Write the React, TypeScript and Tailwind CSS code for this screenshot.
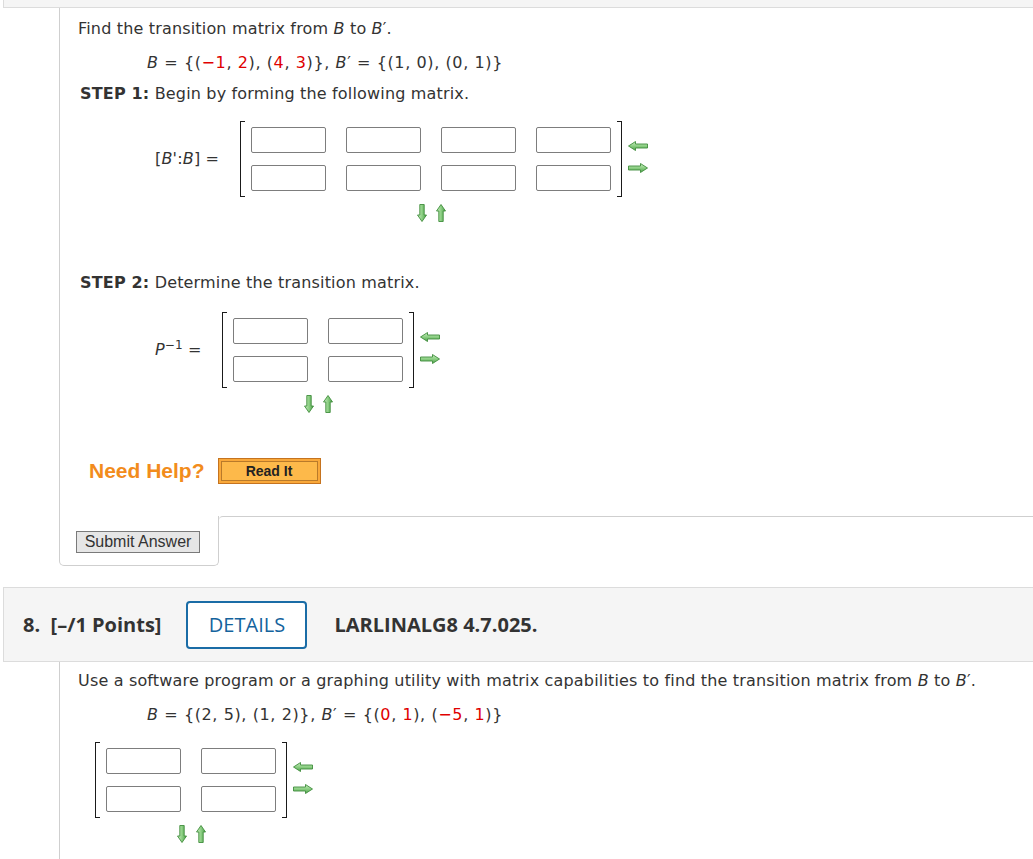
import React from "react";

const FONT = { fontFamily: '"DejaVu Sans", Verdana, sans-serif' };

function HArrow({ dir }: { dir: "left" | "right" }) {
  const pts =
    dir === "left"
      ? "0.5,5 7.5,0.5 7.5,3 19.5,3 19.5,7 7.5,7 7.5,9.5"
      : "19.5,5 12.5,0.5 12.5,3 0.5,3 0.5,7 12.5,7 12.5,9.5";
  return (
    <svg width="20" height="10" viewBox="0 0 20 10">
      <defs>
        <linearGradient id="hg" x1="0" y1="0" x2="0" y2="1">
          <stop offset="0" stopColor="#c9ecc0" />
          <stop offset="0.5" stopColor="#8ccf83" />
          <stop offset="1" stopColor="#4d9f4a" />
        </linearGradient>
      </defs>
      <polygon points={pts} fill="url(#hg)" stroke="#3f8d3c" strokeWidth="0.9" strokeLinejoin="round" />
    </svg>
  );
}

function VArrow({ dir }: { dir: "up" | "down" }) {
  const pts =
    dir === "down"
      ? "2.8,0.5 7.2,0.5 7.2,11 9.5,11 5,17.5 0.5,11 2.8,11"
      : "2.8,17.5 7.2,17.5 7.2,7 9.5,7 5,0.5 0.5,7 2.8,7";
  return (
    <svg width="10" height="18" viewBox="0 0 10 18">
      <defs>
        <linearGradient id="vg" x1="0" y1="0" x2="1" y2="0">
          <stop offset="0" stopColor="#c9ecc0" />
          <stop offset="0.5" stopColor="#8ccf83" />
          <stop offset="1" stopColor="#4d9f4a" />
        </linearGradient>
      </defs>
      <polygon points={pts} fill="url(#vg)" stroke="#3f8d3c" strokeWidth="0.9" strokeLinejoin="round" />
    </svg>
  );
}

function Matrix({ cols }: { cols: number }) {
  const cells = Array.from({ length: cols * 2 });
  return (
    <div className="flex items-start">
      <div className="flex flex-col items-center">
        <div className="flex h-[76px]">
          <div className="w-[5px] border-y border-l border-[#1a1a1a]" />
          <div
            className={`grid gap-x-[20px] gap-y-[12px] px-[6px] py-[6px] ${cols === 4 ? "grid-cols-4" : "grid-cols-2"}`}
          >
            {cells.map((_, i) => (
              <div key={i} className="h-[26px] w-[75px] rounded-[2px] border border-[#7d7d7d] bg-white" />
            ))}
          </div>
          <div className="w-[5px] border-y border-r border-[#1a1a1a]" />
        </div>
        <div className="mt-[7px] flex gap-[9px]">
          <VArrow dir="down" />
          <VArrow dir="up" />
        </div>
      </div>
      <div className="ml-[6px] mt-[20px] flex flex-col gap-[12px]">
        <HArrow dir="left" />
        <HArrow dir="right" />
      </div>
    </div>
  );
}

const R = ({ children }: { children: React.ReactNode }) => <span className="text-[#e00000]">{children}</span>;

export default function App() {
  return (
    <div
      className="relative h-[859px] w-[1033px] overflow-hidden bg-white text-[16px] leading-[20px] tracking-[0.17px] text-[#333]"
      style={FONT}
    >
      {/* top strip */}
      <div className="ml-[3px] h-[8px] border-b border-l border-[#dcdcdc] bg-[#f5f5f5]" />

      {/* question 7 body */}
      <div className="ml-[59px]">
        <div className="flex flex-col border-l border-[#cfcfcf] pb-[32px] pl-[18px] pt-[11px]">
          <div>
            Find the transition matrix from <i>B</i> to <i>B</i>′.
          </div>
          <div className="ml-[69px] mt-[14px] tracking-[0.6px]">
            <i>B</i> = {"{("}
            <R>−1</R>, <R>2</R>), (<R>4</R>, <R>3</R>){"}"}, <i>B</i>′ = {"{(1, 0), (0, 1)}"}
          </div>
          <div className="ml-[2px] mt-[11px]">
            <b>STEP 1:</b> Begin by forming the following matrix.
          </div>
          <div className="ml-[77px] mt-[17px] flex items-start">
            <div className="flex h-[76px] w-[85px] items-center">
              <span>
                [<i>B</i>':<i>B</i>] =
              </span>
            </div>
            <Matrix cols={4} />
          </div>
          <div className="ml-[2px] mt-[51px]">
            <b>STEP 2:</b> Determine the transition matrix.
          </div>
          <div className="ml-[77px] mt-[19px] flex items-start">
            <div className="flex h-[76px] w-[67px] items-center">
              <span>
                <i>P</i>
                <sup className="text-[12px]">−1</sup> =
              </span>
            </div>
            <Matrix cols={2} />
          </div>
          <div className="ml-[11px] mt-[45px] flex h-[26px] items-center tracking-normal">
            <span className="text-[21px] font-bold text-[#f28c1c]" style={{ fontFamily: '"Liberation Sans", Arial, sans-serif' }}>
              Need Help?
            </span>
            <div className="ml-[13px] h-[26px] w-[103px] border border-[#c5731f] bg-[#f9a83a] p-[2px]">
              <div
                className="flex h-full w-full items-center justify-center border border-[#b97a2a] bg-[#fdb94a] text-[14px] font-bold text-[#222]"
                style={{ fontFamily: '"Liberation Sans", Arial, sans-serif' }}
              >
                Read It
              </div>
            </div>
          </div>
        </div>
        <div className="flex">
          <div className="h-[50px] w-[160px] rounded-b-[5px] border-x border-b border-[#cfcfcf] pl-[16px] pt-[15px]">
            <div
              className="flex h-[22px] w-[124px] items-center justify-center border border-[#7a7a7a] bg-[#e6e6e6] text-[16px] tracking-normal text-[#333]"
              style={{ fontFamily: '"Liberation Sans", Arial, sans-serif' }}
            >
              Submit Answer
            </div>
          </div>
          <div className="flex-1 rounded-tl-[4px] border-t border-[#cfcfcf]" />
        </div>
      </div>

      {/* question 8 header */}
      <div
        className="ml-[3px] mt-[21px] flex h-[75px] items-center border-y border-l border-[#dcdcdc] bg-[#f5f5f5] pl-[19px] text-[20px] tracking-normal text-[#333]"
        style={{ fontFamily: '"Open Sans", sans-serif' }}
      >
        <span className="font-bold">8.&nbsp; [–/1 Points]</span>
        <div className="ml-[25px] flex h-[48px] w-[121px] items-center justify-center rounded-[4px] border-2 border-[#1a6ca6] bg-white font-medium text-[#14639d]">
          DETAILS
        </div>
        <span className="ml-[27px] font-bold">LARLINALG8 4.7.025.</span>
      </div>

      {/* question 8 body */}
      <div className="ml-[59px] flex h-[300px] flex-col border-l border-[#cfcfcf] pl-[18px] pt-[9px]">
        <div>
          Use a software program or a graphing utility with matrix capabilities to find the transition matrix from <i>B</i> to{" "}
          <i>B</i>′.
        </div>
        <div className="ml-[69px] mt-[14px] tracking-[0.6px]">
          <i>B</i> = {"{(2, 5), (1, 2)}"}, <i>B</i>′ = {"{("}
          <R>0</R>, <R>1</R>), (<R>−5</R>, <R>1</R>){"}"}
        </div>
        <div className="ml-[17px] mt-[17px]">
          <Matrix cols={2} />
        </div>
      </div>
    </div>
  );
}
